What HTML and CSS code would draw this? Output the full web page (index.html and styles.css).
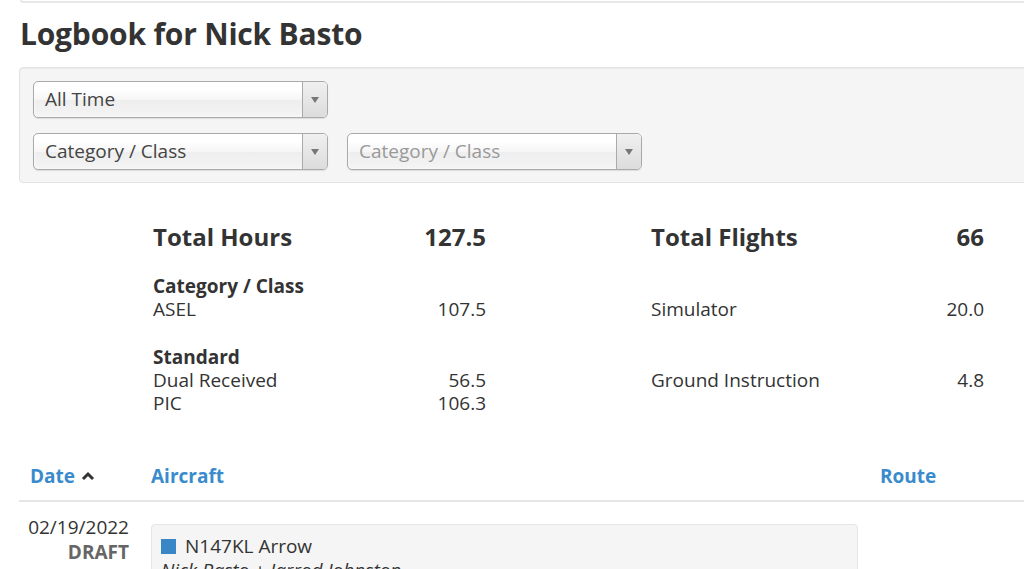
FILE: index.html
```html
<!DOCTYPE html>
<html>
<head>
<meta charset="utf-8">
<link rel="stylesheet" href="styles.css">
</head>
<body>
<div class="page">
  <div class="topbox"></div>
  <h1 class="title">Logbook for Nick Basto</h1>

  <div class="well">
    <div class="filter-row">
      <div class="select"><span class="sel-text">All Time</span><span class="sel-arrow"><i class="tri"></i></span></div>
    </div>
    <div class="filter-row">
      <div class="select"><span class="sel-text">Category / Class</span><span class="sel-arrow"><i class="tri"></i></span></div>
      <div class="select"><span class="sel-text placeholder">Category / Class</span><span class="sel-arrow"><i class="tri"></i></span></div>
    </div>
  </div>

  <div class="summary">
    <div class="sum-col">
      <div class="sum-total"><span>Total Hours</span><span>127.5</span></div>
      <div class="sum-group">
        <div class="sum-head">Category / Class</div>
        <div class="sum-line"><span>ASEL</span><span>107.5</span></div>
      </div>
      <div class="sum-group">
        <div class="sum-head">Standard</div>
        <div class="sum-line"><span>Dual Received</span><span>56.5</span></div>
        <div class="sum-line"><span>PIC</span><span>106.3</span></div>
      </div>
    </div>
    <div class="sum-col">
      <div class="sum-total"><span>Total Flights</span><span>66</span></div>
      <div class="sum-group">
        <div class="sum-head">&nbsp;</div>
        <div class="sum-line"><span>Simulator</span><span>20.0</span></div>
      </div>
      <div class="sum-group">
        <div class="sum-head">&nbsp;</div>
        <div class="sum-line"><span>Ground Instruction</span><span>4.8</span></div>
      </div>
    </div>
  </div>

  <div class="table">
    <div class="thead">
      <div class="col-date"><span class="th">Date</span>
        <svg class="caret" width="14" height="10" viewBox="0 0 14 10"><path d="M2 8 L7 3 L12 8" fill="none" stroke="#333" stroke-width="3"/></svg>
      </div>
      <div class="col-aircraft"><span class="th">Aircraft</span></div>
      <div class="col-route"><span class="th">Route</span></div>
    </div>
    <div class="trow">
      <div class="col-date cell-date">
        <div>02/19/2022</div>
        <div class="draft">DRAFT</div>
      </div>
      <div class="col-aircraft">
        <div class="card">
          <div class="card-title"><span class="swatch"></span>N147KL Arrow</div>
          <div class="card-crew">Nick Basto + Jarrod Johnston</div>
        </div>
      </div>
      <div class="col-route"></div>
    </div>
  </div>
</div>
</body>
</html>
```

FILE: styles.css
```css
html, body {
  margin: 0;
  padding: 0;
  background: #fff;
  overflow: hidden;
}
body {
  font-family: "Open Sans", "Liberation Sans", sans-serif;
  color: #333;
  font-size: 19px;
}
.page {
  width: 1060px;
  padding-left: 19px;
}
.topbox {
  height: 1px;
  margin-left: 1px;
  border: 2px solid #e8e8e8;
  border-top: none;
  border-radius: 0 0 4px 4px;
  background: #fff;
}
.title {
  margin: 9px 0 0 1px;
  font-size: 30px;
  line-height: 44px;
  font-weight: 700;
  letter-spacing: -0.2px;
  color: #333;
}
.well {
  margin-top: 11px;
  background: #f5f5f5;
  border: 1px solid #e3e3e3;
  border-radius: 4px;
  box-shadow: inset 0 1px 1px rgba(0,0,0,0.05);
  padding: 13px 13px 12px;
  display: flex;
  flex-direction: column;
  gap: 15px;
}
.filter-row {
  display: flex;
  gap: 19px;
}
.select {
  width: 293px;
  height: 35px;
  display: flex;
  border: 1px solid #aaa;
  border-radius: 5px;
  background: linear-gradient(#ffffff 20%, #f6f6f6 50%, #eeeeee 52%, #f4f4f4 100%);
  box-shadow: inset 0 0 3px #fff, 0 1px 1px rgba(0,0,0,0.1);
  overflow: hidden;
}
.sel-text {
  flex: 1;
  padding-left: 11px;
  line-height: 35px;
  font-size: 19px;
  color: #444;
}
.sel-text.placeholder {
  color: #999;
}
.sel-arrow {
  width: 24px;
  border-left: 1px solid #aaa;
  background: linear-gradient(#f0f0f0, #dcdcdc);
  display: flex;
  align-items: center;
  justify-content: center;
}
.tri {
  width: 0;
  height: 0;
  border-left: 4px solid transparent;
  border-right: 4px solid transparent;
  border-top: 6px solid #777;
}
.summary {
  display: flex;
  gap: 165px;
  margin: 39px 0 0 134px;
}
.sum-col {
  width: 333px;
}
.sum-total {
  display: flex;
  justify-content: space-between;
  font-size: 24px;
  font-weight: 700;
  line-height: 30px;
}
.sum-group {
  margin-top: 25px;
}
.sum-total + .sum-group {
  margin-top: 23px;
}
.sum-head {
  font-weight: 700;
  line-height: 23px;
}
.sum-line {
  display: flex;
  justify-content: space-between;
  line-height: 23px;
}
.table {
  margin: 48px 0 0 -1px;
}
.thead {
  display: flex;
  border-bottom: 2px solid #e6e6e6;
  padding-bottom: 11px;
  margin-left: 1px;
}
.th {
  color: #3a8bcc;
  font-weight: 700;
  line-height: 24px;
}
.col-date {
  width: 100px;
  padding: 0 11px;
  display: flex;
  align-items: center;
  gap: 6px;
}
.thead .col-date {
  width: 99px;
}
.col-aircraft {
  width: 707px;
  padding: 0 11px;
}
.col-route {
  padding: 0 11px;
}
.caret {
  display: block;
}
.trow {
  display: flex;
  padding-top: 22px;
}
.cell-date {
  flex-direction: column;
  align-items: flex-end;
  margin-top: -8px;
  line-height: 23px;
  gap: 2px;
}
.draft {
  font-weight: 700;
  color: #666;
}
.card {
  background: #f5f5f5;
  border: 1px solid #e6e6e6;
  border-radius: 4px;
  padding: 9px 9px 10px;
}
.card-title {
  display: flex;
  align-items: center;
  gap: 9px;
  line-height: 24px;
}
.swatch {
  width: 15px;
  height: 15px;
  background: #3a87c8;
}
.card-crew {
  font-style: italic;
  line-height: 24px;
}
```
